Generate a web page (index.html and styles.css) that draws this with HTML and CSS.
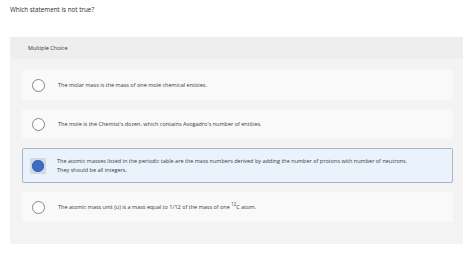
FILE: index.html
```html
<!DOCTYPE html>
<html lang="en">
<head>
  <meta charset="UTF-8" />
  <meta name="viewport" content="width=device-width, initial-scale=1" />
  <title>Multiple Choice</title>
  <link rel="stylesheet" href="styles.css">
</head>
<body>

  <p class="question">Which statement is not true?</p>

  <div class="panel">
    <div class="panel-head">Multiple Choice</div>

    <div class="choices">
      <label class="choice">
        <span class="radio"></span>
        <span class="choice-text">The molar mass is the mass of one mole chemical entities.</span>
      </label>

      <label class="choice">
        <span class="radio"></span>
        <span class="choice-text">The mole is the Chemist's dozen, which contains Avogadro's number of entities.</span>
      </label>

      <label class="choice selected">
        <span class="radio"></span>
        <span class="choice-text">The atomic masses listed in the periodic table are the mass numbers derived by adding the number of protons with number of neutrons.<br>They should be all integers.</span>
      </label>

      <label class="choice">
        <span class="radio"></span>
        <span class="choice-text">The atomic mass unit (u) is a mass equal to 1/12 of the mass of one <sup>12</sup>C atom.</span>
      </label>
    </div>
  </div>

</body>
</html>
```

FILE: styles.css
```css
* {
  box-sizing: border-box;
}

body {
  margin: 0;
  padding: 0 11px 0 10px;
  background: #ffffff;
  font-family: "Open Sans", Arial, sans-serif;
  color: #3a3a3a;
}

.question {
  margin: 0;
  padding-top: 6px;
  height: 37px;
  font-size: 6.3px;
  line-height: 8px;
  color: #2b2b2b;
}

.panel {
  background: #f3f3f3;
  padding-bottom: 22px;
}

.panel-head {
  height: 22px;
  display: flex;
  align-items: center;
  padding-left: 18px;
  background: #eeeeee;
  font-size: 5.5px;
  color: #333333;
}

.choices {
  display: flex;
  flex-direction: column;
  gap: 9px;
  padding: 11px 10px 0 12px;
}

.choice {
  display: flex;
  align-items: center;
  min-height: 30px;
  padding: 0 9px;
  background: #f9f9f9;
  border: 1px solid transparent;
  border-radius: 2px;
  font-size: 5.5px;
  line-height: 8.5px;
  color: #3a3a3a;
}

.choice.selected {
  min-height: 35px;
  background: #eaf2fc;
  border-color: #aab5c8;
}

.radio {
  flex: none;
  width: 13px;
  height: 13px;
  border: 1px solid #858585;
  border-radius: 50%;
  background: #ffffff;
  margin-right: 13px;
}

/* selected dot sits in a light focus square */
.selected .radio {
  width: 16px;
  height: 16px;
  border: none;
  border-radius: 1px;
  background: radial-gradient(circle, #3c6ebf 5.8px, #d3d9e3 6.4px);
  margin-left: -2px;
  margin-right: 11px;
}

.choice-text sup {
  font-size: 4.4px;
  line-height: 0;
}
```
